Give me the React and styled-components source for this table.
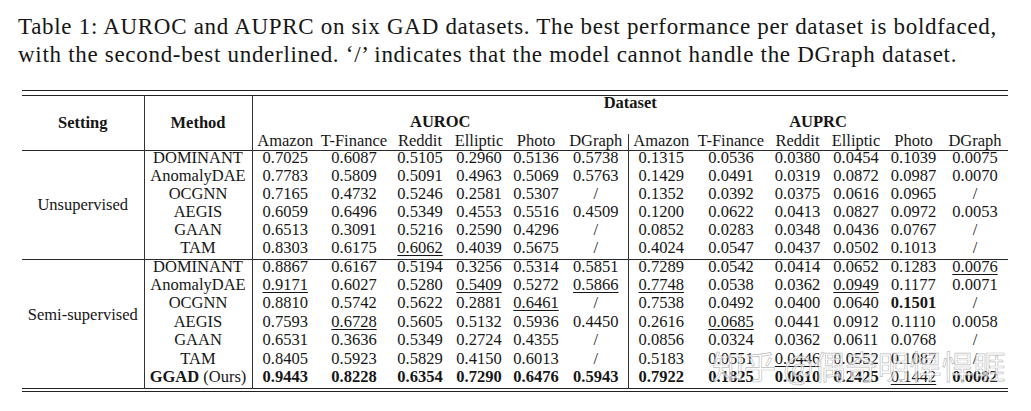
import React from 'react';
import styled, { createGlobalStyle } from 'styled-components';

const GlobalStyle = createGlobalStyle`
  html, body { margin: 0; padding: 0; background: #fff; }
  body {
    font-family: "Liberation Serif", "Times New Roman", serif;
    color: #161616;
  }
`;

const Page = styled.div`
  position: relative;
  width: 1031px;
  height: 411px;
  overflow: hidden;
  padding-top: 13px;
  box-sizing: border-box;
`;

const Caption = styled.div`
  margin-left: 18px;
  width: 979px;
  font-size: 23px;
  letter-spacing: 0.7px;
  line-height: 28px;
`;

const CaptionLine = styled.div`
  text-align: ${p => (p.$justify ? 'justify' : 'left')};
  text-align-last: ${p => (p.$justify ? 'justify' : 'auto')};
`;

const Frame = styled.div`
  margin: 21px 0 0 22px;
  width: 986px;
  border-top: 1.4px solid #222;
  border-bottom: 1.4px solid #222;
  padding: 4px 0 2px;
`;

const Grid = styled.table`
  border-collapse: collapse;
  table-layout: fixed;
  width: 986px;
  font-size: 16.5px;
  border-top: 1.4px solid #222;
  border-bottom: 1.4px solid #222;
`;

const Col = styled.col`
  width: ${p => p.$w}px;
`;

const Row = styled.tr`
  height: ${p => p.$h}px;
  border-top: ${p => (p.$rule ? '1px solid #2a2a2a' : 'none')};
  border-bottom: ${p => (p.$under ? '1px solid #2a2a2a' : 'none')};
`;

const Cell = styled.td`
  padding: 0;
  text-align: center;
  vertical-align: ${p => (p.$middle ? 'middle' : 'top')};
  line-height: 14px;
  white-space: nowrap;
  overflow: visible;
  border-right: ${p => (p.$rule ? '1px solid #333' : 'none')};
  font-weight: ${p => (p.$bold ? 700 : 400)};
`;

const Head = styled(Cell).attrs({ as: 'th' })`
  font-weight: ${p => (p.$plain ? 400 : 700)};
`;

const Under = styled.span`
  text-decoration: underline;
  text-decoration-thickness: 1px;
  text-underline-offset: 2px;
`;

const Strong = styled.b`
  font-weight: 700;
`;

const Watermark = styled.div`
  position: absolute;
  left: 712px;
  top: 342px;
  font-family: "Noto Sans CJK SC", "Noto Sans", sans-serif;
  font-size: 32px;
  color: rgba(255, 255, 255, 0.7);
  -webkit-text-stroke: 0.7px rgba(120, 120, 120, 0.5);
  pointer-events: none;
  white-space: nowrap;
`;

const widths = [122, 108, 66, 72, 60, 58, 56, 64, 66, 74, 59, 58, 57, 66];
const names = ['Amazon', 'T-Finance', 'Reddit', 'Elliptic', 'Photo', 'DGraph'];

// "_" marks second best (underlined), "*" marks best (bold)
const unsupervised = [
  ['DOMINANT', '0.7025 0.6087 0.5105 0.2960 0.5136 0.5738 0.1315 0.0536 0.0380 0.0454 0.1039 0.0075'],
  ['AnomalyDAE', '0.7783 0.5809 0.5091 0.4963 0.5069 0.5763 0.1429 0.0491 0.0319 0.0872 0.0987 0.0070'],
  ['OCGNN', '0.7165 0.4732 0.5246 0.2581 0.5307 / 0.1352 0.0392 0.0375 0.0616 0.0965 /'],
  ['AEGIS', '0.6059 0.6496 0.5349 0.4553 0.5516 0.4509 0.1200 0.0622 0.0413 0.0827 0.0972 0.0053'],
  ['GAAN', '0.6513 0.3091 0.5216 0.2590 0.4296 / 0.0852 0.0283 0.0348 0.0436 0.0767 /'],
  ['TAM', '0.8303 0.6175 0.6062_ 0.4039 0.5675 / 0.4024 0.0547 0.0437 0.0502 0.1013 /'],
];

const semi = [
  ['DOMINANT', '0.8867 0.6167 0.5194 0.3256 0.5314 0.5851 0.7289 0.0542 0.0414 0.0652 0.1283 0.0076_'],
  ['AnomalyDAE', '0.9171_ 0.6027 0.5280 0.5409_ 0.5272 0.5866_ 0.7748_ 0.0538 0.0362 0.0949_ 0.1177 0.0071'],
  ['OCGNN', '0.8810 0.5742 0.5622 0.2881 0.6461_ / 0.7538 0.0492 0.0400 0.0640 0.1501* /'],
  ['AEGIS', '0.7593 0.6728_ 0.5605 0.5132 0.5936 0.4450 0.2616 0.0685_ 0.0441 0.0912 0.1110 0.0058'],
  ['GAAN', '0.6531 0.3636 0.5349 0.2724 0.4355 / 0.0856 0.0324 0.0362 0.0611 0.0768 /'],
  ['TAM', '0.8405 0.5923 0.5829 0.4150 0.6013 / 0.5183 0.0551 0.0446_ 0.0552 0.1087 /'],
];

const ours = '0.9443* 0.8228* 0.6354* 0.7290* 0.6476* 0.5943* 0.7922* 0.1825* 0.0610* 0.2425* 0.1442_ 0.0082*';

function Value({ raw, index }) {
  const rule = index === 5;
  if (raw.endsWith('_')) {
    return <Cell $rule={rule}><Under>{raw.slice(0, -1)}</Under></Cell>;
  }
  if (raw.endsWith('*')) {
    return <Cell $rule={rule}><Strong>{raw.slice(0, -1)}</Strong></Cell>;
  }
  return <Cell $rule={rule}>{raw}</Cell>;
}

function Values({ line }) {
  return line.split(' ').map((raw, i) => <Value key={i} raw={raw} index={i} />);
}

export default function App() {
  return (
    <Page>
      <GlobalStyle />
      <Caption>
        <CaptionLine $justify>
          Table 1: AUROC and AUPRC on six GAD datasets. The best performance per dataset is boldfaced,
        </CaptionLine>
        <CaptionLine>
          with the second-best underlined. ‘/’ indicates that the model cannot handle the DGraph dataset.
        </CaptionLine>
      </Caption>

      <Frame>
        <Grid>
          <colgroup>
            {widths.map((w, i) => <Col key={i} $w={w} />)}
          </colgroup>
          <thead>
            <Row $h={19}>
              <Head rowSpan={3} $middle $rule>Setting</Head>
              <Head rowSpan={3} $middle $rule>Method</Head>
              <Head colSpan={12}>Dataset</Head>
            </Row>
            <Row $h={19}>
              <Head colSpan={6}>AUROC</Head>
              <Head colSpan={6}>AUPRC</Head>
            </Row>
            <Row $h={17} $under>
              {[...names, ...names].map((n, i) => (
                <Head key={i} $plain $rule={i === 5}>{n}</Head>
              ))}
            </Row>
          </thead>
          <tbody>
            {unsupervised.map(([method, line], i) => (
              <Row key={method} $h={18.15}>
                {i === 0 && <Cell rowSpan={6} $middle $rule>Unsupervised</Cell>}
                <Cell $rule>{method}</Cell>
                <Values line={line} />
              </Row>
            ))}
            {semi.map(([method, line], i) => (
              <Row key={method} $h={18.45} $rule={i === 0}>
                {i === 0 && <Cell rowSpan={6} $middle $rule>Semi-supervised</Cell>}
                <Cell $rule>{method}</Cell>
                <Values line={line} />
              </Row>
            ))}
            <Row $h={18.45}>
              <Cell $rule />
              <Cell $rule><Strong>GGAD</Strong> (Ours)</Cell>
              <Values line={ours} />
            </Row>
          </tbody>
        </Grid>
      </Frame>

      <Watermark>知乎 @偶奇明悍悍睚</Watermark>
    </Page>
  );
}
